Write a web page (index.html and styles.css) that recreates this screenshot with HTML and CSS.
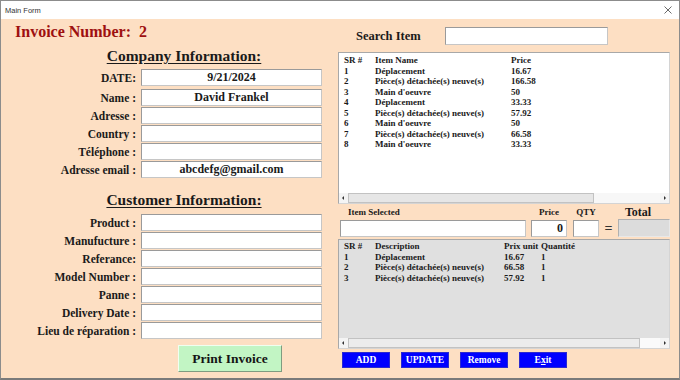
FILE: index.html
```html
<!DOCTYPE html>
<html lang="en">
<head>
    <meta charset="UTF-8">
    <meta name="viewport" content="width=device-width, initial-scale=1.0">
    <title>Main Form</title>
    <link rel="stylesheet" href="styles.css">
</head>
<body>
    <div class="window">
        <div class="titlebar">
            <span>Main Form</span>
            <svg class="close" width="8" height="8" viewBox="0 0 8 8">
                <path d="M0.5 0.5 L7.5 7.5 M7.5 0.5 L0.5 7.5" stroke="#444" stroke-width="0.8" fill="none"/>
            </svg>
        </div>

        <div class="main">
            <div class="left">
                <h1 class="invoice-no">Invoice Number:&nbsp; 2</h1>

                <h2 class="section-title">Company Information:</h2>
                <div class="fields">
                    <div class="field first"><label>DATE:</label><input type="text" value="9/21/2024"></div>
                    <div class="field"><label>Name :</label><input type="text" value="David Frankel"></div>
                    <div class="field"><label>Adresse :</label><input type="text"></div>
                    <div class="field"><label>Country :</label><input type="text"></div>
                    <div class="field"><label>Téléphone :</label><input type="text"></div>
                    <div class="field"><label>Adresse email :</label><input type="text" value="abcdefg@gmail.com"></div>
                </div>

                <h2 class="section-title customer">Customer Information:</h2>
                <div class="fields customer-fields">
                    <div class="field"><label>Product :</label><input type="text"></div>
                    <div class="field"><label>Manufucture :</label><input type="text"></div>
                    <div class="field"><label>Referance:</label><input type="text"></div>
                    <div class="field"><label>Model Number :</label><input type="text"></div>
                    <div class="field"><label>Panne :</label><input type="text"></div>
                    <div class="field"><label>Delivery Date :</label><input type="text"></div>
                    <div class="field"><label>Lieu de réparation :</label><input type="text"></div>
                </div>

                <button class="print-btn">Print Invoice</button>
            </div>

            <div class="right">
                <div class="search-row">
                    <span>Search Item</span>
                    <input type="text">
                </div>

                <div class="listbox items">
                    <div class="list-rows">
                        <div class="list-row"><span>SR #</span><span>Item Name</span><span>Price</span></div>
                        <div class="list-row"><span>1</span><span>Déplacement</span><span>16.67</span></div>
                        <div class="list-row"><span>2</span><span>Pièce(s) détachée(s) neuve(s)</span><span>166.58</span></div>
                        <div class="list-row"><span>3</span><span>Main d'oeuvre</span><span>50</span></div>
                        <div class="list-row"><span>4</span><span>Déplacement</span><span>33.33</span></div>
                        <div class="list-row"><span>5</span><span>Pièce(s) détachée(s) neuve(s)</span><span>57.92</span></div>
                        <div class="list-row"><span>6</span><span>Main d'oeuvre</span><span>50</span></div>
                        <div class="list-row"><span>7</span><span>Pièce(s) détachée(s) neuve(s)</span><span>66.58</span></div>
                        <div class="list-row"><span>8</span><span>Main d'oeuvre</span><span>33.33</span></div>
                    </div>
                    <div class="hscroll">
                        <div class="arrow left-arrow"></div>
                        <div class="thumb"></div>
                        <div class="track"></div>
                        <div class="arrow right-arrow"></div>
                    </div>
                </div>

                <div class="entry-row">
                    <div class="cell item-cell">
                        <div class="cell-label">Item Selected</div>
                        <input type="text">
                    </div>
                    <div class="cell price-cell">
                        <div class="cell-label">Price</div>
                        <input type="text" value="0">
                    </div>
                    <div class="cell qty-cell">
                        <div class="cell-label">QTY</div>
                        <input type="text">
                    </div>
                    <div class="cell eq-cell">
                        <div class="cell-label"></div>
                        <div class="eq">=</div>
                    </div>
                    <div class="cell total-cell">
                        <div class="cell-label total-label">Total</div>
                        <div class="total-box"></div>
                    </div>
                </div>

                <div class="listbox cart">
                    <div class="list-rows">
                        <div class="list-row"><span>SR #</span><span>Description</span><span>Prix unit</span><span>Quantité</span></div>
                        <div class="list-row"><span>1</span><span>Déplacement</span><span>16.67</span><span>1</span></div>
                        <div class="list-row"><span>2</span><span>Pièce(s) détachée(s) neuve(s)</span><span>66.58</span><span>1</span></div>
                        <div class="list-row"><span>3</span><span>Pièce(s) détachée(s) neuve(s)</span><span>57.92</span><span>1</span></div>
                    </div>
                    <div class="hscroll">
                        <div class="arrow left-arrow"></div>
                        <div class="thumb"></div>
                        <div class="track"></div>
                        <div class="arrow right-arrow"></div>
                    </div>
                </div>

                <div class="actions">
                    <button class="action-btn">ADD</button>
                    <button class="action-btn">UPDATE</button>
                    <button class="action-btn">Remove</button>
                    <button class="action-btn">E<u>x</u>it</button>
                </div>
            </div>
        </div>
    </div>
</body>
</html>
```

FILE: styles.css
```css
body {
    margin: 0;
    font-family: 'Liberation Serif', 'Times New Roman', serif;
    color: #1a1a1a;
}

.window {
    width: 680px;
    height: 380px;
    box-sizing: border-box;
    border: 1px solid #8c8c8c;
    border-bottom: 2px solid #7a7a7a;
    background: #fddfc3;
    display: flex;
    flex-direction: column;
}

.titlebar {
    height: 18px;
    background: #fff;
    display: flex;
    align-items: center;
    justify-content: space-between;
    padding: 0 7px 0 4px;
    font-family: 'Liberation Sans', Arial, sans-serif;
    font-size: 7.5px;
    color: #333;
}

.main {
    flex: 1;
    display: flex;
}

/* left column */
.left {
    width: 329px;
}

.invoice-no {
    margin: 4px 0 0 14px;
    font-size: 16px;
    line-height: 18px;
    font-weight: bold;
    color: #9e1010;
}

.section-title {
    margin: 6px 0 0 37px;
    width: 292px;
    text-align: center;
    font-size: 15.5px;
    line-height: 18px;
    font-weight: bold;
    text-decoration: underline;
    text-underline-offset: 2px;
}

.section-title.customer {
    margin-top: 13px;
}

.fields {
    margin-top: 4px;
    display: flex;
    flex-direction: column;
    gap: 1px;
}

.customer-fields {
    margin-top: 5px;
}

.field {
    display: flex;
    align-items: center;
    height: 17px;
}

.field.first {
    margin-bottom: 2px;
}

.field label {
    width: 140px;
    box-sizing: border-box;
    padding-right: 5px;
    text-align: right;
    font-size: 11.5px;
    font-weight: bold;
}

input {
    box-sizing: border-box;
    height: 17px;
    margin: 0;
    padding: 0;
    background: #fff;
    border: 1px solid #c6c6c6;
    border-top-color: #9a9a9a;
    border-left-color: #9a9a9a;
    font-family: 'Liberation Serif', 'Times New Roman', serif;
    font-weight: bold;
    color: #1a1a1a;
    outline: none;
}

.field input {
    width: 181px;
    font-size: 12px;
    text-align: center;
}

.print-btn {
    display: block;
    margin: 6px 0 0 177px;
    width: 104px;
    height: 27px;
    background: #c2f5c4;
    border: 1px solid;
    border-color: #effff0 #7f9c80 #7f9c80 #effff0;
    font-family: 'Liberation Serif', 'Times New Roman', serif;
    font-size: 13.5px;
    font-weight: bold;
    color: #141414;
    padding: 0;
}

/* right column */
.right {
    flex: 1;
    padding: 0 9px 0 8px;
    display: flex;
    flex-direction: column;
}

.search-row {
    margin-top: 8px;
    height: 18px;
    display: flex;
    align-items: center;
}

.search-row span {
    width: 89px;
    margin-left: 18px;
    font-size: 12.5px;
    font-weight: bold;
}

.search-row input {
    width: 163px;
    height: 18px;
}

.listbox {
    box-sizing: border-box;
    border: 1px solid #a8a8a8;
    border-right-color: #d4d4d4;
    border-bottom-color: #d4d4d4;
    display: flex;
    flex-direction: column;
}

.listbox.items {
    margin-top: 7px;
    height: 152px;
    background: #fff;
}

.listbox.cart {
    margin-top: 2px;
    height: 110px;
    background: #e0e0e0;
}

.list-rows {
    padding: 2px 0 0 5px;
    font-size: 9px;
    font-weight: bold;
    line-height: 10.5px;
}

.cart .list-rows {
    padding-top: 1px;
}

.list-row {
    display: grid;
    grid-template-columns: 31px 136px auto;
    white-space: nowrap;
}

.cart .list-row {
    grid-template-columns: 31px 129px 37px auto;
}

.hscroll {
    margin-top: auto;
    height: 10px;
    display: flex;
    background: #f2f2f2;
}

.arrow {
    width: 9px;
    position: relative;
    background: #f4f4f4;
}

.arrow::after {
    content: '';
    position: absolute;
    top: 3px;
    left: 3px;
    border: 2px solid transparent;
}

.left-arrow::after {
    border-right-color: #333;
    left: 1px;
}

.right-arrow::after {
    border-left-color: #333;
    left: 4px;
}

.thumb {
    width: 246px;
    box-sizing: border-box;
    background: #e6e6e6;
    border: 1px solid #c2c2c2;
}

.cart .thumb {
    width: 292px;
    background: #ececec;
}

.track {
    flex: 1;
    background: #f7f7f7;
}

.cart .track {
    background: #fafafa;
}

.entry-row {
    margin-top: 1px;
    display: flex;
}

.cell {
    display: flex;
    flex-direction: column;
    align-items: center;
}

.cell-label {
    height: 15px;
    line-height: 15px;
    font-size: 9px;
    font-weight: bold;
}

.item-cell {
    margin-left: 2px;
    align-items: stretch;
}

.item-cell .cell-label {
    padding-left: 8px;
}

.item-cell input {
    width: 186px;
}

.price-cell {
    margin-left: 5px;
}

.price-cell input {
    width: 36px;
    text-align: right;
    padding-right: 3px;
    font-size: 12px;
}

.qty-cell {
    margin-left: 6px;
}

.qty-cell input {
    width: 26px;
}

.eq-cell {
    width: 19px;
}

.eq {
    height: 17px;
    line-height: 17px;
    font-size: 14px;
    font-weight: bold;
    color: #333;
}

.total-label {
    font-size: 12px;
    padding-right: 12px;
}

.total-box {
    box-sizing: border-box;
    width: 52px;
    height: 18px;
    margin-top: -1px;
    background: #dcdcdc;
    border: 1px solid #b0b0b0;
    border-right-color: #e8e8e8;
    border-bottom-color: #e8e8e8;
}

.actions {
    margin-top: 3px;
    padding-left: 4px;
    display: flex;
    gap: 11px;
}

.action-btn {
    width: 48px;
    height: 16px;
    padding: 0;
    background: #0000ff;
    border: 1px solid #2a2ad0;
    color: #fff;
    font-family: 'Liberation Serif', 'Times New Roman', serif;
    font-size: 9.5px;
    font-weight: bold;
}
```
